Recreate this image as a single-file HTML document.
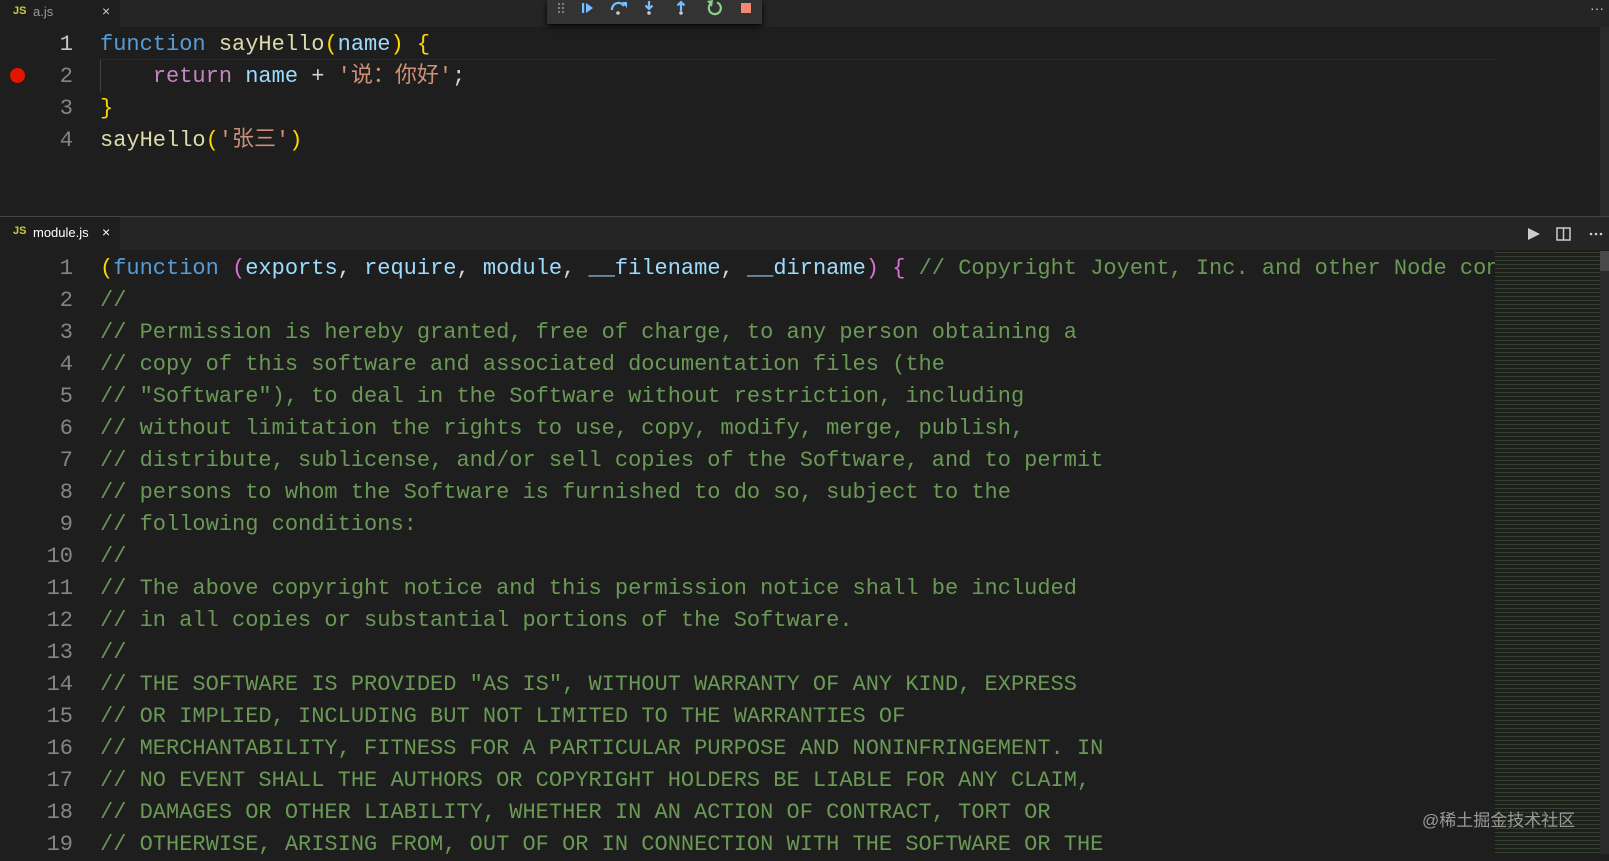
<!DOCTYPE html>
<html><head><meta charset="utf-8"><style>
body{margin:0;width:1609px;height:854px;background:#1e1e1e;overflow:hidden;position:relative;font-family:"Liberation Mono","Noto Sans CJK SC",monospace;}
.bar{position:absolute;left:0;width:1609px;background:#252526;}
.tab{position:absolute;left:0;width:120px;background:#1e1e1e;font-family:"Liberation Sans",sans-serif;font-size:13px;color:#fff;}
.tab .js{position:absolute;left:13px;color:#cbcb41;font-weight:bold;font-size:11px;}
.tab .x{position:absolute;left:102px;color:#ccc;font-size:14px;}
.code{position:absolute;left:0;width:1495px;overflow:hidden;font-size:22px;}
.ln{height:32px;line-height:32px;white-space:pre;position:relative;}
.ln .n{position:absolute;left:0;width:73px;text-align:right;color:#858585;}
.ln .t{position:absolute;left:100px;}
.c{color:#6a9955}.k{color:#569cd6}.f{color:#dcdcaa}.p{color:#9cdcfe}.r{color:#c586c0}.s{color:#ce9178}.y{color:#ffd700}.m{color:#da70d6}.w{color:#d4d4d4}
.mini{position:absolute;left:1495px;width:105px;}
</style></head><body>
<div class="bar" style="top:0;height:27px"></div>
<div class="tab" style="top:0;height:27px;color:#999"><span class="js" style="top:5px">JS</span><span style="position:absolute;left:33px;top:4px">a.js</span><span class="x" style="top:3px">×</span></div>
<div style="position:absolute;left:547px;top:0;width:215px;height:24px;background:#333;box-shadow:0 2px 6px #000;">
<svg width="215" height="24" viewBox="0 0 215 24">
<g fill="#888"><circle cx="12" cy="4" r="1.1"/><circle cx="16" cy="4" r="1.1"/><circle cx="12" cy="8" r="1.1"/><circle cx="16" cy="8" r="1.1"/><circle cx="12" cy="12" r="1.1"/><circle cx="16" cy="12" r="1.1"/></g>
<rect x="35" y="3" width="2.2" height="10" fill="#75beff"/><path d="M39 3 L46 8 L39 13Z" fill="#75beff"/>
<path d="M65 10 A6.5 6.5 0 0 1 77 6" stroke="#75beff" stroke-width="2.2" fill="none"/><path d="M75 2 L80 2 L80 8Z" fill="#75beff"/><circle cx="71" cy="13" r="1.8" fill="#ccc"/>
<path d="M102 1 V9 M98.5 5.5 L102 9 L105.5 5.5" stroke="#75beff" stroke-width="2.2" fill="none"/><circle cx="102" cy="13" r="1.8" fill="#ccc"/>
<path d="M134 11 V2 M130.5 5.5 L134 2 L137.5 5.5" stroke="#75beff" stroke-width="2.2" fill="none"/><circle cx="134" cy="13" r="1.8" fill="#ccc"/>
<path d="M164 3.5 A6 6 0 1 0 170 2.5" stroke="#89d185" stroke-width="2.2" fill="none"/><path d="M160 1 L165 7 L166 0Z" fill="#89d185"/>
<rect x="194" y="3" width="10" height="10" fill="#f48771"/>
</svg></div>
<div style="position:absolute;left:1590px;top:0;color:#ccc;font-size:14px;font-family:'Liberation Sans'">···</div>
<div style="position:absolute;left:100px;top:59px;width:1395px;height:1px;background:#2a2a2a"></div>
<div style="position:absolute;left:100px;top:60px;width:1px;height:32px;background:#404040"></div>
<div style="position:absolute;left:10px;top:68px;width:15px;height:15px;border-radius:50%;background:#e51400"></div>
<div class="code" style="top:29px">
<div class="ln"><span class="n" style="color:#c6c6c6">1</span><span class="t"><span class="k">function</span> <span class="f">sayHello</span><span class="y">(</span><span class="p">name</span><span class="y">)</span> <span class="y">{</span></span></div>
<div class="ln"><span class="n">2</span><span class="t">    <span class="r">return</span> <span class="p">name</span> <span class="w">+</span> <span class="s">'说：你好'</span><span class="w">;</span></span></div>
<div class="ln"><span class="n">3</span><span class="t"><span class="y">}</span></span></div>
<div class="ln"><span class="n">4</span><span class="t"><span class="f">sayHello</span><span class="y">(</span><span class="s">'张三'</span><span class="y">)</span></span></div>
</div>
<div style="position:absolute;left:1600px;top:27px;width:9px;height:190px;background:#2a2a2a"></div>
<div style="position:absolute;left:0;top:216px;width:1609px;height:1px;background:#444"></div>
<div class="bar" style="top:217px;height:33px"></div>
<div class="tab" style="top:217px;height:33px"><span class="js" style="top:8px">JS</span><span style="position:absolute;left:33px;top:8px">module.js</span><span class="x" style="top:7px;color:#fff">×</span></div>
<svg style="position:absolute;left:1525px;top:226px" width="84" height="16"><path d="M3 2 L15 8 L3 14Z" fill="#ccc"/><rect x="32" y="2" width="13" height="12" stroke="#ccc" stroke-width="1.5" fill="none"/><path d="M38.5 2 V14" stroke="#ccc" stroke-width="1.5"/><g fill="#ccc"><circle cx="66" cy="8" r="1.3"/><circle cx="71" cy="8" r="1.3"/><circle cx="76" cy="8" r="1.3"/></g></svg>
<div class="code" style="top:253px">
<div class="ln"><span class="n">1</span><span class="t"><span class="y">(</span><span class="k">function</span> <span class="m">(</span><span class="p">exports</span><span class="w">,</span> <span class="p">require</span><span class="w">,</span> <span class="p">module</span><span class="w">,</span> <span class="p">__filename</span><span class="w">,</span> <span class="p">__dirname</span><span class="m">)</span> <span class="m">{</span> <span class="c">// Copyright Joyent, Inc. and other Node contributors.</span></span></div>
<div class="ln"><span class="n">2</span><span class="t c">//</span></div>
<div class="ln"><span class="n">3</span><span class="t c">// Permission is hereby granted, free of charge, to any person obtaining a</span></div>
<div class="ln"><span class="n">4</span><span class="t c">// copy of this software and associated documentation files (the</span></div>
<div class="ln"><span class="n">5</span><span class="t c">// "Software"), to deal in the Software without restriction, including</span></div>
<div class="ln"><span class="n">6</span><span class="t c">// without limitation the rights to use, copy, modify, merge, publish,</span></div>
<div class="ln"><span class="n">7</span><span class="t c">// distribute, sublicense, and/or sell copies of the Software, and to permit</span></div>
<div class="ln"><span class="n">8</span><span class="t c">// persons to whom the Software is furnished to do so, subject to the</span></div>
<div class="ln"><span class="n">9</span><span class="t c">// following conditions:</span></div>
<div class="ln"><span class="n">10</span><span class="t c">//</span></div>
<div class="ln"><span class="n">11</span><span class="t c">// The above copyright notice and this permission notice shall be included</span></div>
<div class="ln"><span class="n">12</span><span class="t c">// in all copies or substantial portions of the Software.</span></div>
<div class="ln"><span class="n">13</span><span class="t c">//</span></div>
<div class="ln"><span class="n">14</span><span class="t c">// THE SOFTWARE IS PROVIDED "AS IS", WITHOUT WARRANTY OF ANY KIND, EXPRESS</span></div>
<div class="ln"><span class="n">15</span><span class="t c">// OR IMPLIED, INCLUDING BUT NOT LIMITED TO THE WARRANTIES OF</span></div>
<div class="ln"><span class="n">16</span><span class="t c">// MERCHANTABILITY, FITNESS FOR A PARTICULAR PURPOSE AND NONINFRINGEMENT. IN</span></div>
<div class="ln"><span class="n">17</span><span class="t c">// NO EVENT SHALL THE AUTHORS OR COPYRIGHT HOLDERS BE LIABLE FOR ANY CLAIM,</span></div>
<div class="ln"><span class="n">18</span><span class="t c">// DAMAGES OR OTHER LIABILITY, WHETHER IN AN ACTION OF CONTRACT, TORT OR</span></div>
<div class="ln"><span class="n">19</span><span class="t c">// OTHERWISE, ARISING FROM, OUT OF OR IN CONNECTION WITH THE SOFTWARE OR THE</span></div>
</div>
<div class="mini" style="top:251px;height:603px;background:repeating-linear-gradient(#1e1e1e 0 1px,#3c4a35 1px 2px,#1e1e1e 2px 4px);opacity:.8"></div>
<div style="position:absolute;left:1600px;top:251px;width:9px;height:603px;background:#2a2a2a"></div>
<div style="position:absolute;left:1600px;top:251px;width:9px;height:20px;background:#4a4a4a"></div>
<div style="position:absolute;left:1422px;top:806px;color:#999;font-size:17px;font-family:'Liberation Sans','Noto Sans CJK SC',sans-serif">@稀土掘金技术社区</div>
</body></html>
